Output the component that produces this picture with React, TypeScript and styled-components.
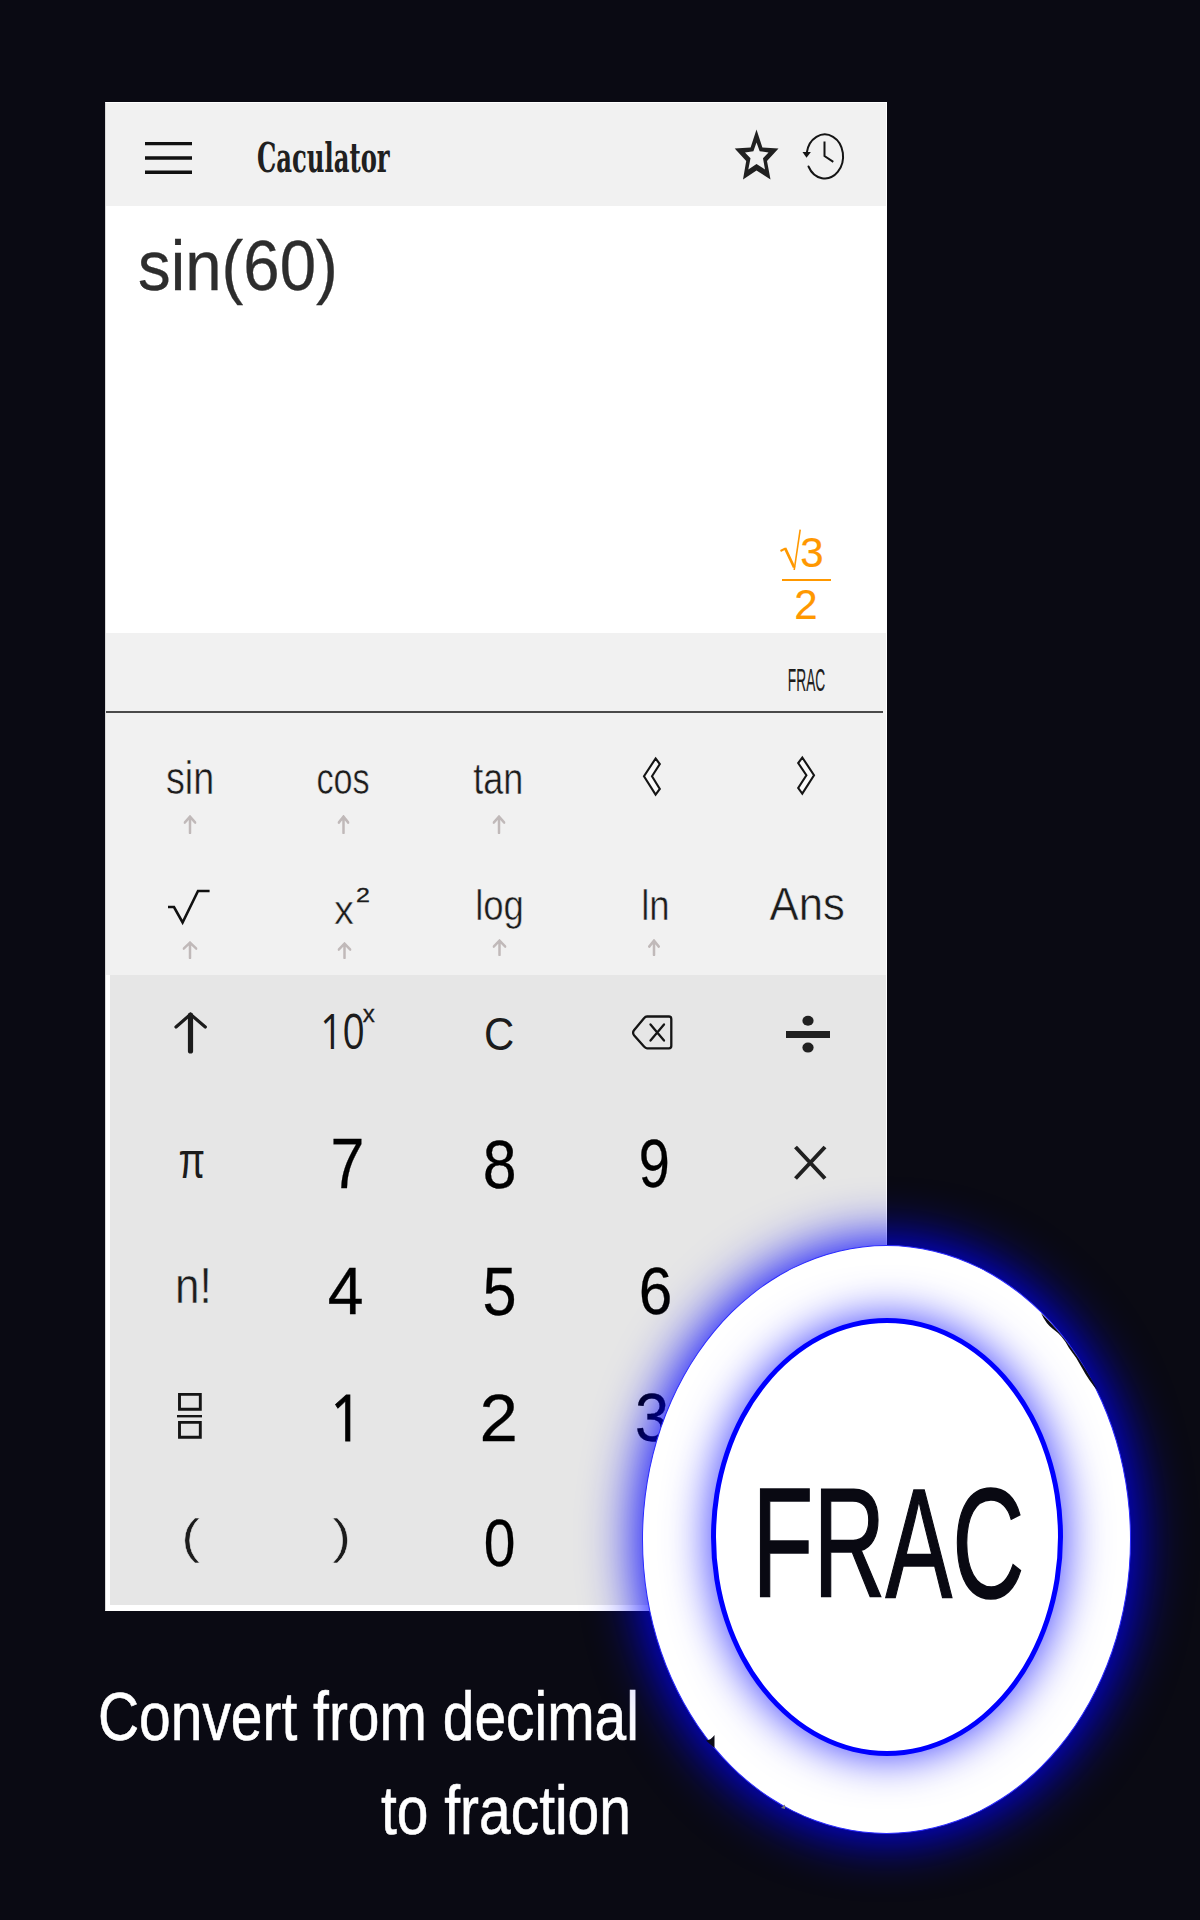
import React from "react";
import styled, { createGlobalStyle } from "styled-components";

const GlobalStyle = createGlobalStyle`
  *, *::before, *::after { box-sizing: border-box; }
  body { margin: 0; background: #0a0a13; }
`;

const Poster = styled.main`
  position: relative;
  width: 1200px;
  height: 1920px;
  padding: 102px 0 0 105px;
  overflow: hidden;
  background: #0a0a13;
  font-family: "Liberation Sans", Arial, sans-serif;
`;

const Phone = styled.section`
  width: 782px;
  height: 1509px;
  border: 1px solid #fff;
  border-left-color: #d8d8d8;
  background: #f1f1f1;
`;

const Header = styled.header`
  display: flex;
  align-items: center;
  height: 103px;
  padding: 0 41px 0 39px;
`;

const MenuIcon = styled.svg`
  width: 48px;
  height: 34px;
  margin-top: 7px;
`;

interface TextProps {
  $size: number;
  $sx?: number;
  $dx?: number;
  $dy?: number;
  $color?: string;
  $thin?: string;
  $bold?: number;
  $font?: string;
}

const Glyph = styled.span<TextProps>`
  display: block;
  white-space: nowrap;
  font-family: ${(p) => p.$font ?? '"Liberation Sans", Arial, sans-serif'};
  font-size: ${(p) => p.$size}px;
  line-height: 64px;
  color: ${(p) => p.$color ?? "#1c1c1c"};
  transform: translate(${(p) => p.$dx ?? 0}px, ${(p) => p.$dy ?? 0}px) scaleX(${(p) => p.$sx ?? 1});
  ${(p) => (p.$thin ? `-webkit-text-stroke: 0.5px ${p.$thin};` : "")}
  ${(p) => (p.$bold ? `-webkit-text-stroke: ${p.$bold}px ${p.$color ?? "#1c1c1c"};` : "")}
`;

const Title = styled.h1`
  flex: 1;
  margin: 7px 0 0 64px;
  font: bold 41px/60px "DejaVu Serif", "Liberation Serif", serif;
  color: #202020;
  white-space: nowrap;
  transform: scaleX(0.592);
  transform-origin: left;
`;

const Actions = styled.div`
  display: flex;
  align-items: center;
  gap: 22px;
`;

const Display = styled.div`
  display: flex;
  flex-direction: column;
  justify-content: space-between;
  height: 427px;
  padding: 25px 50px 0 32px;
  background: #fff;
`;

const Expression = styled.div`
  font-size: 70px;
  line-height: 70px;
  color: #2d2d2d;
  -webkit-text-stroke: 0.3px #2d2d2d;
  transform: scaleX(0.934);
  transform-origin: left;
`;

const Fraction = styled.div`
  align-self: flex-end;
  display: flex;
  flex-direction: column;
  align-items: center;
  width: 60px;
  color: #ff9800;
  font-size: 42px;
  line-height: 48px;
  -webkit-text-stroke: 0.2px #ff9800;
`;

const Numerator = styled.div`
  display: flex;
  align-items: center;
  margin: 0 8px 2px 0;
`;

const Radical = styled.svg`
  width: 22px;
  height: 42px;
  margin: -6px -2px 0 0;
`;

const Vinculum = styled.div`
  width: 49px;
  height: 2px;
  background: #ff9800;
`;

const Denominator = styled.div`
  height: 52px;
`;

const ModeStrip = styled.div`
  display: flex;
  justify-content: flex-end;
  align-items: center;
  width: 777px;
  height: 80px;
  border-bottom: 2px solid #4a4a4a;
`;

const ModeLabel = styled.div`
  display: flex;
  justify-content: center;
  width: 154px;
`;

const FunctionPad = styled.div`
  display: grid;
  grid-template: 128px 134px / repeat(5, 154px);
  padding-left: 7px;
`;

const FunctionKey = styled.div`
  display: flex;
  flex-direction: column;
  align-items: center;
  padding-top: 32px;
`;

const KeyFace = styled.div`
  display: flex;
  align-items: center;
  justify-content: center;
  height: 64px;
`;

const ArrowSlot = styled.div<{ $dx?: number; $dy?: number }>`
  height: 19px;
  margin-top: 6px;
  transform: translate(${(p) => p.$dx ?? 0}px, ${(p) => p.$dy ?? 0}px);
  line-height: 0;
`;

const NumberPad = styled.div`
  display: grid;
  grid-template: repeat(5, 126px) / repeat(5, 154px);
  height: 635px;
  padding-left: 3px;
  border-left: 4px solid #fff;
  border-bottom: 5px solid #fff;
  background: #e6e6e6;
`;

const PadKey = styled.div`
  display: flex;
  align-items: center;
  justify-content: center;
`;

const Icon = styled.svg<{ $dx?: number; $dy?: number }>`
  display: block;
  overflow: visible;
  transform: translate(${(p) => p.$dx ?? 0}px, ${(p) => p.$dy ?? 0}px);
`;

const Caption = styled.div`
  padding-top: 59px;
`;

const CaptionLine = styled.div<{ $indent: number }>`
  margin-left: ${(p) => p.$indent}px;
  width: max-content;
  font-size: 68px;
  line-height: 93.5px;
  color: #fff;
  -webkit-text-stroke: 0.6px #fff;
  transform: scaleX(0.837);
  transform-origin: left;
`;

const Lens = styled.div`
  position: absolute;
  left: 642px;
  top: 1245px;
  display: flex;
  align-items: center;
  justify-content: center;
  width: 489px;
  height: 589px;
  border: 1px solid #2a2aff;
  border-radius: 50%;
  background: #fff;
  box-shadow: 0 0 54px 5px #0000ff;
`;

const LensRing = styled.div`
  display: flex;
  align-items: center;
  justify-content: center;
  width: 352px;
  height: 438px;
  margin-top: -5px;
  border: 5px solid #0000ff;
  border-radius: 50%;
  background: #fff;
  box-shadow: 0 0 46px rgba(0, 0, 255, 0.8);
`;

const LensEdge = styled.svg`
  position: absolute;
  left: -1px;
  top: -1px;
  width: 489px;
  height: 589px;
`;

const LIGHT = "#f1f1f1";
const GREY = "#e6e6e6";

function SmallArrow({ w = 13, h = 19 }: { w?: number; h?: number }) {
  return (
    <svg width={w} height={h} viewBox={`0 0 ${w} ${h}`} fill="none" stroke="#c0b9b9" strokeWidth="2.5" strokeLinecap="round">
      <path d={`M${w / 2} ${h - 1}V2M1.2 7.6L${w / 2} 1.6L${w - 1.2} 7.6`} />
    </svg>
  );
}

interface FnProps {
  children: React.ReactNode;
  arrow?: { dx?: number; dy?: number; w?: number; h?: number };
}

function Fn({ children, arrow }: FnProps) {
  return (
    <FunctionKey>
      <KeyFace>{children}</KeyFace>
      {arrow && (
        <ArrowSlot $dx={arrow.dx} $dy={arrow.dy}>
          <SmallArrow w={arrow.w} h={arrow.h} />
        </ArrowSlot>
      )}
    </FunctionKey>
  );
}

interface DigitProps {
  value: string;
  size: number;
  sx: number;
  dx?: number;
  dy?: number;
  font?: string;
  bold?: number;
}

function Digit({ value, size, sx, dx, dy, font, bold = 0.3 }: DigitProps) {
  return (
    <PadKey>
      <Glyph $size={size} $sx={sx} $dx={dx} $dy={dy} $color="#000" $font={font} $bold={bold}>
        {value}
      </Glyph>
    </PadKey>
  );
}

const OPEN = '"Open Sans", "Noto Sans", sans-serif';

export default function App() {
  return (
    <Poster>
      <GlobalStyle />
      <Phone>
        <Header>
          <MenuIcon viewBox="0 0 48 34" stroke="#111" strokeWidth="3.4">
            <path d="M0 2.6H47M0 17H47M0 31.2H47" />
          </MenuIcon>
          <Title>Caculator</Title>
          <Actions>
            <Icon width="44" height="50" viewBox="736 129 44 50" $dx={-2} $dy={-0.5}>
              <path
                fill="#202020"
                fillRule="evenodd"
                d="M757.5 129L763.4 147L779.5 148L768 160.5L771.5 179L757.5 170L744 179L747.2 160.5L735.7 148L751.6 147ZM757.5 142L754.4 150.7L746 152L751.5 157.7L749.3 169L757.5 163.5L766 169L764 157.7L769.5 152L760.7 150.7Z"
              />
            </Icon>
            <Icon width="42" height="46" viewBox="803 133 42 46" $dx={-0.5} fill="none" stroke="#151515" strokeWidth="2">
              <path d="M807.2 154A18.3 22 0 1 1 809 167.5" strokeLinecap="round" />
              <path d="M803 153H811.4L807 158.8Z" fill="#151515" stroke="none" />
              <path d="M825 142.5V157L833.8 162.8" />
            </Icon>
          </Actions>
        </Header>

        <Display>
          <Expression>sin(60)</Expression>
          <Fraction>
            <Numerator>
              <Radical viewBox="0 0 22 42" fill="none" stroke="#ff9800">
                <path d="M0.5 22L5.6 19.4" strokeWidth="2" />
                <path d="M5 19L14.2 38.5" strokeWidth="2.8" />
                <path d="M14.2 41L20.2 0.6" strokeWidth="1.6" />
              </Radical>
              3
            </Numerator>
            <Vinculum />
            <Denominator>2</Denominator>
          </Fraction>
        </Display>

        <ModeStrip>
          <ModeLabel>
            <Glyph $size={32} $sx={0.43} $dx={1} $dy={8} $bold={0.2}>FRAC</Glyph>
          </ModeLabel>
        </ModeStrip>

        <FunctionPad>
          <Fn arrow={{ dx: -0.5 }}>
            <Glyph $size={45.5} $sx={0.83} $dx={0} $dy={1.5} $thin={LIGHT}>sin</Glyph>
          </Fn>
          <Fn arrow={{ w: 12, dx: -0.5 }}>
            <Glyph $size={45} $sx={0.76} $dx={-1} $dy={1.5} $thin={LIGHT}>cos</Glyph>
          </Fn>
          <Fn arrow={{ dx: 0.5 }}>
            <Glyph $size={45} $sx={0.8} $dx={0} $dy={1.5} $thin={LIGHT}>tan</Glyph>
          </Fn>
          <Fn>
            <Icon width="18" height="40" viewBox="644 756 18 40" $dy={-1} fill="#fafafa" stroke="#151515" strokeWidth="2.1">
              <path d="M656.6 758.5L660.8 764L653 776.2L660.8 789L656.6 794.6L645 776.2Z" />
            </Icon>
          </Fn>
          <Fn>
            <Icon width="18" height="40" viewBox="797 755 18 40" $dy={-2} fill="#fafafa" stroke="#151515" strokeWidth="2.1">
              <path d="M802.3 757.5L814 775.2L802.3 793.6L798.2 788L806.4 775.2L798.2 763Z" />
            </Icon>
          </Fn>

          <Fn arrow={{ w: 15, h: 18, dx: -0.5, dy: -2 }}>
            <Icon width="42" height="34" viewBox="168 890 42 34" $dx={-1} $dy={2} fill="none" stroke="#111" strokeWidth="2.6">
              <path d="M168 907H174L182.6 922.5L198 891H209.6" />
            </Icon>
          </Fn>
          <Fn arrow={{ w: 14, h: 17, dx: 0.5, dy: -1 }}>
            <Glyph $size={40} $dx={5.5} $dy={5} $thin={LIGHT}>x</Glyph>
            <Glyph $size={20} $sx={1.25} $dx={9.5} $dy={-10} $bold={0.3}>2</Glyph>
          </Fn>
          <Fn arrow={{ w: 14, h: 17, dx: 1.5, dy: -4 }}>
            <Glyph $size={42} $sx={0.87} $dx={1.5} $dy={1} $thin={LIGHT}>log</Glyph>
          </Fn>
          <Fn arrow={{ w: 12, h: 17, dx: 2, dy: -4 }}>
            <Glyph $size={42} $sx={0.87} $dx={3} $dy={1} $thin={LIGHT}>ln</Glyph>
          </Fn>
          <Fn>
            <Glyph $size={45.5} $sx={0.96} $dx={1} $dy={0} $thin={LIGHT}>Ans</Glyph>
          </Fn>
        </FunctionPad>

        <NumberPad>
          <PadKey>
            <Icon width="34" height="42" viewBox="174 1012 34 42" $dx={0.5} $dy={-5} fill="none" stroke="#1c1c1c" strokeLinecap="round">
              <path d="M191 1051V1015" strokeWidth="5.2" />
              <path d="M176.5 1027L191 1014.3L205.8 1027" strokeWidth="3.2" />
            </Icon>
          </PadKey>
          <PadKey>
            <Glyph $size={50} $sx={0.78} $dx={4} $dy={-8} $font={OPEN}>10</Glyph>
            <Glyph $size={23} $sx={1.05} $dx={-4} $dy={-24} $bold={0.3}>x</Glyph>
          </PadKey>
          <PadKey>
            <Glyph $size={46} $sx={0.91} $dx={1.5} $dy={-4}>C</Glyph>
          </PadKey>
          <PadKey>
            <Icon width="40" height="34" viewBox="632 1014 40 34" $dy={-6} fill="none" stroke="#151515" strokeWidth="2.3" strokeLinejoin="round" strokeLinecap="round">
              <path d="M647 1015.5H669Q671.3 1015.5 671.3 1018V1045Q671.3 1047.3 669 1047.3H647Q645.5 1047.3 644 1045.6L634 1034.2Q632.2 1031.7 634 1029.3L644 1017.3Q645.5 1015.5 647 1015.5Z" />
              <path d="M650.5 1023.5L664 1039.5M664 1023.5L650.5 1039.5" />
            </Icon>
          </PadKey>
          <PadKey>
            <Icon width="44" height="38" viewBox="786 1015 44 38" $dx={2} $dy={-4} fill="#202020">
              <rect x="786" y="1031" width="44" height="7" />
              <ellipse cx="808" cy="1020.7" rx="5.6" ry="5" />
              <ellipse cx="808" cy="1047.6" rx="5.6" ry="5" />
            </Icon>
          </PadKey>

          <PadKey>
            <Glyph $size={50} $sx={0.77} $dx={1.5} $dy={-3}>π</Glyph>
          </PadKey>
          <Digit value="7" size={70} sx={0.87} dx={3} dy={0} />
          <Digit value="8" size={69} sx={0.88} dx={1.5} dy={0.5} />
          <Digit value="9" size={69} sx={0.81} dx={2} dy={0} />
          <PadKey>
            <Icon width="32" height="34" viewBox="795 1146 32 34" $dx={4.5} $dy={-1} stroke="#202020" strokeWidth="4">
              <path d="M796 1147L825.5 1178.5M825.5 1147L796 1178.5" />
            </Icon>
          </PadKey>

          <PadKey>
            <Glyph $size={50} $sx={0.88} $dx={3.5} $dy={-4} $thin={GREY}>n!</Glyph>
          </PadKey>
          <Digit value="4" size={67} sx={0.96} dx={2} dy={1} />
          <Digit value="5" size={68} sx={0.9} dx={1.5} dy={1} />
          <Digit value="6" size={67} sx={0.9} dx={4} dy={1} />
          <PadKey />

          <PadKey>
            <Icon width="26" height="46" viewBox="177 1393 26 46" fill="none" stroke="#151515" strokeWidth="2.9">
              <path d="M179.5 1394.4H200.3V1409.3H179.5ZM179.5 1422.4H200.3V1437.3H179.5Z" />
              <path d="M177 1416.2H202" strokeWidth="2.4" />
            </Icon>
          </PadKey>
          <Digit value="1" size={64.5} sx={0.86} dx={2} dy={0} font={OPEN} bold={0.8} />
          <Digit value="2" size={67} sx={1.03} dx={1} dy={2} />
          <Digit value="3" size={68} sx={0.9} dy={0.5} />
          <PadKey />

          <PadKey>
            <Glyph $size={49} $sx={1.15} $dx={0.5} $dy={-6} $thin={GREY}>(</Glyph>
          </PadKey>
          <PadKey>
            <Glyph $size={49} $sx={1.15} $dx={-2.5} $dy={-6} $thin={GREY}>)</Glyph>
          </PadKey>
          <Digit value="0" size={67} sx={0.85} dx={2} dy={1} />
          <PadKey />
          <PadKey />
        </NumberPad>
      </Phone>

      <Caption>
        <CaptionLine $indent={-7}>Convert from decimal</CaptionLine>
        <CaptionLine $indent={275.5}>to fraction</CaptionLine>
      </Caption>

      <Lens>
        <LensRing>
          <Glyph $size={156} $sx={0.641} $dx={2} $dy={5.5} $color="#090912" $bold={1.6}>FRAC</Glyph>
        </LensRing>
        <LensEdge viewBox="642 1244 489 589" fill="#0b0b16">
          <path d="M1041 1312Q1046 1323 1053 1328Q1063 1335 1069 1347Q1077 1357 1082 1367Q1089 1380 1098 1390Q1073 1343 1041 1312Z" />
          <path d="M714.5 1734V1747L706 1739.5Q711 1739 714.5 1734Z" />
          <path d="M781 1807L785 1803.5V1808Z" fill="#777" />
        </LensEdge>
      </Lens>
    </Poster>
  );
}
